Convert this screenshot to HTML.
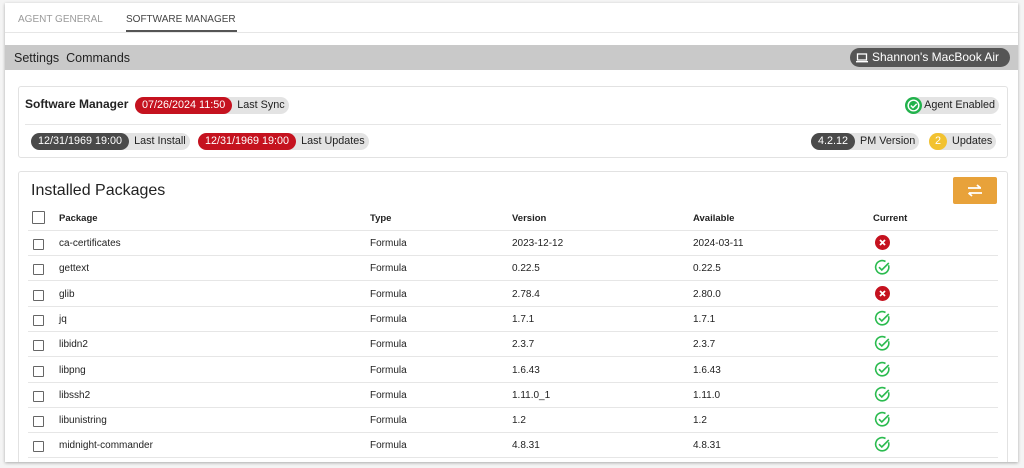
<!DOCTYPE html>
<html><head><style>
*{box-sizing:border-box;margin:0;padding:0}
body{width:1024px;height:468px;background:#f4f4f4;font-family:"Liberation Sans",sans-serif;color:#222;position:relative;overflow:hidden}
.outer{position:absolute;left:5px;top:3px;width:1013px;height:459px;background:#fff;box-shadow:0 1px 3px rgba(0,0,0,.3);overflow:hidden}
.tab{position:absolute;top:11px;font-size:10px;letter-spacing:0}
.tabline{position:absolute;left:0;right:0;top:29px;border-top:1px solid #e6e6e6}
.bar{position:absolute;left:0;right:0;top:42px;height:25px;background:#c9c9c9;font-size:12.5px}
.card{position:absolute;left:13px;width:990px;border:1px solid #e2e2e2;border-radius:3px;background:#fff}
.pill{position:absolute;height:17px;border-radius:9px;background:#e3e3e3;font-size:10.8px;line-height:17px;white-space:nowrap}
.pill b{display:inline-block;font-weight:normal;color:#fff;border-radius:9px;padding:0 7px;height:17px}
.pill span{padding:0 4px 0 5px}
.red{background:#c5121f}.dark{background:#4a4a4a}
.cb{position:absolute;width:11px;height:11px;border:1.5px solid #666;border-radius:1px}
.row{position:absolute;left:9px;right:9px;height:25px;border-bottom:1px solid #e6e6e6;font-size:10px}
.row div{position:absolute;top:7px}
</style></head><body>
<div class="outer">
<div class="tab" style="left:13px;color:#9a9a9a">AGENT GENERAL</div>
<div class="tab" style="left:121px;color:#444">SOFTWARE MANAGER</div>
<div style="position:absolute;left:121px;top:27px;width:111px;height:2px;background:#555"></div>
<div class="tabline"></div>
<div class="bar"><span style="position:absolute;left:9px;top:6px">Settings&nbsp; Commands</span>
<div style="position:absolute;left:845px;top:3px;width:160px;height:19px;border-radius:10px;background:#555;color:#fff;font-size:12px;line-height:19px;padding-left:22px">Shannon's MacBook Air
<svg style="position:absolute;left:6px;top:5px" width="12" height="10" viewBox="0 0 12 10"><rect x="1.5" y="1" width="9" height="6" fill="none" stroke="#fff" stroke-width="1.3"/><rect x="0" y="8" width="12" height="1.4" fill="#fff"/></svg></div></div>

<div class="card" style="top:83px;height:72px">
<div style="position:absolute;left:6px;top:10px;font-size:12px;font-weight:bold">Software Manager</div>
<div class="pill" style="left:116px;top:10px"><b class="red">07/26/2024 11:50</b><span>Last Sync</span></div>
<div class="pill" style="right:8px;top:10px;padding-left:0"><svg style="vertical-align:top;margin-top:0" width="17" height="17" viewBox="0 0 16 16"><circle cx="8" cy="8" r="8" fill="#22b24c"/><circle cx="8" cy="8" r="5" fill="none" stroke="#fff" stroke-width="1.4"/><path d="M5.5 8l2 2 3.5-3.5" fill="none" stroke="#fff" stroke-width="1.4"/></svg><span style="padding-left:2px">Agent Enabled</span></div>
<div style="position:absolute;left:6px;right:6px;top:37px;border-top:1px solid #e6e6e6"></div>
<div class="pill" style="left:12px;top:46px"><b class="dark">12/31/1969 19:00</b><span>Last Install</span></div>
<div class="pill" style="left:179px;top:46px"><b class="red">12/31/1969 19:00</b><span>Last Updates</span></div>
<div class="pill" style="left:792px;top:46px"><b class="dark">4.2.12</b><span>PM Version</span></div>
<div class="pill" style="left:910px;top:46px"><b style="background:#f2c230;padding:0 6px">2</b><span>Updates</span></div>
</div>

<div class="card" style="top:168px;height:300px">
<div style="position:absolute;left:12px;top:10px;font-size:16px">Installed Packages</div>
<div style="position:absolute;left:934px;top:5px;width:44px;height:27px;background:#e8a23a;border-radius:2px">
<svg style="position:absolute;left:14px;top:7px" width="16" height="13" viewBox="0 0 16 13"><path d="M1 4h13M10 1l3.5 3M15 9H2M5 12L1.5 9" fill="none" stroke="#fff" stroke-width="1.8"/></svg></div>
<div class="row" style="top:34px;font-weight:bold;font-size:9.5px">
<span class="cb" style="left:4px;top:5px;width:13px;height:13px"></span>
<div style="left:31px">Package</div><div style="left:342px">Type</div><div style="left:484px">Version</div><div style="left:665px">Available</div><div style="left:845px">Current</div></div>
<div id="rows"></div>
</div>
</div>
<script>
var d=[["ca-certificates","2023-12-12","2024-03-11",0],["gettext","0.22.5","0.22.5",1],["glib","2.78.4","2.80.0",0],["jq","1.7.1","1.7.1",1],["libidn2","2.3.7","2.3.7",1],["libpng","1.6.43","1.6.43",1],["libssh2","1.11.0_1","1.11.0",1],["libunistring","1.2","1.2",1],["midnight-commander","4.8.31","4.8.31",1]];
var ok='<svg width="17" height="17" viewBox="0 0 17 17"><path d="M14.5 6.2A6.6 6.6 0 1 1 11.5 2.5" fill="none" stroke="#2bbb4f" stroke-width="1.6"/><path d="M5 8.2l2.8 2.8 7-7" fill="none" stroke="#2bbb4f" stroke-width="1.6"/></svg>';
var no='<svg width="17" height="17" viewBox="0 0 17 17"><circle cx="8.5" cy="8.5" r="7.5" fill="#c5121f"/><path d="M6 6l5 5M11 6l-5 5" stroke="#fff" stroke-width="1.8"/></svg>';
var h='';d.forEach(function(r,i){h+='<div class="row" style="top:'+(59+i*25.3)+'px"><span class="cb" style="left:5px;top:8px"></span><div style="left:31px">'+r[0]+'</div><div style="left:342px">Formula</div><div style="left:484px">'+r[1]+'</div><div style="left:665px">'+r[2]+'</div><div style="left:846px;top:3px">'+(r[3]?ok:no)+'</div></div>'});
document.getElementById('rows').innerHTML=h;
</script>
</body></html>
